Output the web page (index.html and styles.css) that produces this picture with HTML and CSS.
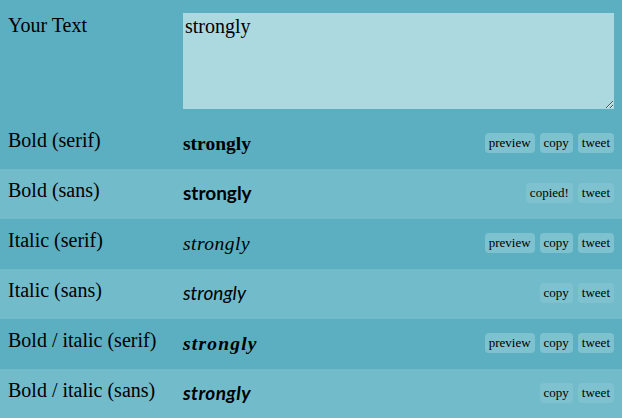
FILE: index.html
```html
<!DOCTYPE html>
<html>
<head>
<meta charset="utf-8">
<link rel="stylesheet" href="styles.css">
</head>
<body>
<div class="table">
  <div class="row row-input">
    <div class="label label-input">Your Text</div>
    <div class="input-cell"><textarea class="text-input">strongly</textarea></div>
  </div>
  <div class="row">
    <div class="label">Bold (serif)</div>
    <div class="output serif bold">strongly</div>
    <div class="actions"><span class="btn">preview</span><span class="btn">copy</span><span class="btn">tweet</span></div>
  </div>
  <div class="row alt">
    <div class="label">Bold (sans)</div>
    <div class="output sans bold">strongly</div>
    <div class="actions"><span class="btn">copied!</span><span class="btn">tweet</span></div>
  </div>
  <div class="row">
    <div class="label">Italic (serif)</div>
    <div class="output serif italic">strongly</div>
    <div class="actions"><span class="btn">preview</span><span class="btn">copy</span><span class="btn">tweet</span></div>
  </div>
  <div class="row alt">
    <div class="label">Italic (sans)</div>
    <div class="output sans italic">strongly</div>
    <div class="actions"><span class="btn">copy</span><span class="btn">tweet</span></div>
  </div>
  <div class="row">
    <div class="label">Bold / italic (serif)</div>
    <div class="output serif bold italic">strongly</div>
    <div class="actions"><span class="btn">preview</span><span class="btn">copy</span><span class="btn">tweet</span></div>
  </div>
  <div class="row alt">
    <div class="label">Bold / italic (sans)</div>
    <div class="output sans bold italic">strongly</div>
    <div class="actions"><span class="btn">copy</span><span class="btn">tweet</span></div>
  </div>
</div>
</body>
</html>
```

FILE: styles.css
```css
html, body {
  margin: 0;
  padding: 0;
}
body {
  background: #5bafc1;
  color: #000;
  font-family: "Liberation Serif", "Times New Roman", serif;
  font-size: 20px;
  overflow: hidden;
}
.table {
  display: flex;
  flex-direction: column;
}
.row {
  display: grid;
  grid-template-columns: 175px 1fr auto;
  height: 50px;
  padding: 0 8px;
  box-sizing: border-box;
}
.row.alt {
  background: #72bbcb;
}
.row-input {
  grid-template-columns: 175px 1fr;
  height: 119px;
}
.label {
  line-height: 20px;
  padding-top: 11px;
  white-space: nowrap;
}
.label-input {
  padding-top: 15px;
}
.input-cell {
  padding-top: 13px;
}
.text-input {
  display: block;
  width: 100%;
  height: 96px;
  box-sizing: border-box;
  margin: 0;
  border: none;
  padding: 2px;
  background: #acd8e0;
  font-family: "Liberation Serif", "Times New Roman", serif;
  font-size: 20px;
  color: #000;
  outline: none;
}
.output {
  line-height: 20px;
  white-space: nowrap;
}
.output.serif {
  font-family: "Liberation Serif", "Times New Roman", serif;
  font-size: 19.5px;
  padding-top: 15.4px;
}
.output.sans {
  font-family: Lato, sans-serif;
  font-size: 19px;
  padding-top: 13.6px;
}
.bold {
  font-weight: bold;
}
.italic {
  font-style: italic;
}
.output.serif.italic {
  letter-spacing: 0.5px;
}
.output.serif.bold.italic {
  letter-spacing: 1.2px;
}
.output.sans.bold.italic {
  letter-spacing: 0.4px;
}
.actions {
  display: flex;
  gap: 5px;
  align-items: flex-start;
  padding-top: 14px;
}
.btn {
  display: block;
  height: 20px;
  line-height: 20px;
  padding: 0 4px;
  border-radius: 4px;
  background: #7fc2cf;
  font-size: 13px;
  font-family: "Liberation Serif", "Times New Roman", serif;
}
```
